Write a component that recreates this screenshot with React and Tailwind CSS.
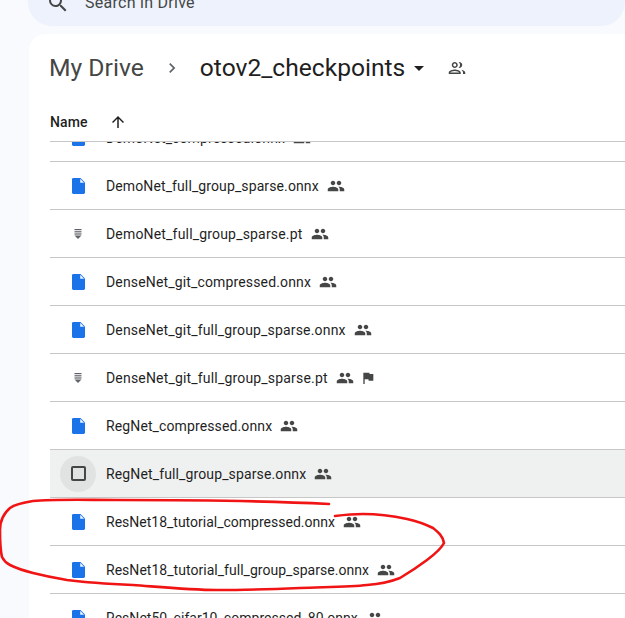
import React from "react";

const People = () => (
  <svg viewBox="0 0 24 24" width="18" height="18" fill="#444746">
    <path d="M16 11c1.66 0 2.99-1.34 2.99-3S17.66 5 16 5c-1.66 0-3 1.34-3 3s1.34 3 3 3zm-8 0c1.66 0 2.99-1.34 2.99-3S9.66 5 8 5C6.34 5 5 6.34 5 8s1.34 3 3 3zm0 2c-2.33 0-7 1.17-7 3.5V19h14v-2.5c0-2.33-4.67-3.5-7-3.5zm8 0c-.29 0-.62.02-.97.05 1.16.84 1.97 1.97 1.97 3.45V19h6v-2.5c0-2.33-4.67-3.5-7-3.5z" />
  </svg>
);

const FileIcon = () => (
  <svg viewBox="0 0 13 16" width="13" height="16" fill="#1a73e8">
    <path d="M1.400 0H8.500L13 4.500V14.600C13 15.400 12.400 16 11.600 16H1.400C.6 16 0 15.400 0 14.600V1.400C0 .6.6 0 1.400 0z" />
    <path d="M8.200 .8V4.800H12.200z" fill="#ffffff" opacity="0.9" />
  </svg>
);

const ZipIcon = () => (
  <svg viewBox="0 0 16 16" width="16" height="16" fill="#5f6368" className="-ml-[1px]">
    <rect x="4.500" y="3" width="7" height="1.200" />
    <rect x="4.500" y="5.200" width="7" height="1.200" />
    <rect x="4.500" y="7.400" width="7" height="1.200" />
    <path d="M4.500 9.600h7L8 13z" />
  </svg>
);

const Flag = () => (
  <svg viewBox="0 0 24 24" width="16" height="16" fill="#444746">
    <path d="M14.400 6 14 4H5v17h2v-7h5.600l.4 2h7V6z" />
  </svg>
);

const rows = [
  { name: "DemoNet_compressed.onnx", icon: "file", track: "tracking-[0.11px]" },
  { name: "DemoNet_full_group_sparse.onnx", icon: "file", track: "tracking-[0.11px]" },
  { name: "DemoNet_full_group_sparse.pt", icon: "zip", track: "tracking-[0.18px]" },
  { name: "DenseNet_git_compressed.onnx", icon: "file", track: "tracking-[0.15px]" },
  { name: "DenseNet_git_full_group_sparse.onnx", icon: "file", track: "tracking-[0.17px]" },
  { name: "DenseNet_git_full_group_sparse.pt", icon: "zip", flag: true, track: "tracking-[0.18px]" },
  { name: "RegNet_compressed.onnx", icon: "file", track: "tracking-[0.12px]" },
  { name: "RegNet_full_group_sparse.onnx", icon: "file", hover: true, track: "tracking-[0.13px]" },
  { name: "ResNet18_tutorial_compressed.onnx", icon: "file", track: "tracking-[0px]" },
  { name: "ResNet18_tutorial_full_group_sparse.onnx", icon: "file", track: "tracking-[0.03px]" },
  { name: "ResNet50_cifar10_compressed_80.onnx", icon: "file", track: "tracking-[0.03px]" },
];

function Row({ row }) {
  return (
    <div
      className={
        "flex h-12 items-center border-b border-[#c7c7c7] " +
        (row.hover ? "bg-[#eff1f0]" : "")
      }
    >
      <div className="flex w-[57px] shrink-0 items-center justify-center">
        {row.hover ? (
          <div className="-ml-[1px] flex h-9 w-9 items-center justify-center rounded-full bg-[#e1e3e2]">
            <div className="h-[15px] w-[15px] rounded-[2px] border-2 border-[#444746]" />
          </div>
        ) : row.icon === "file" ? (
          <FileIcon />
        ) : (
          <ZipIcon />
        )}
      </div>
      <span className={"-ml-[1px] text-[14px] leading-5 text-[#1f1f1f] " + row.track}>{row.name}</span>
      <span className="ml-[8px] flex items-center gap-[6px]">
        <People />
        {row.flag && <Flag />}
      </span>
    </div>
  );
}

export default function App() {
  return (
    <div
      className="relative h-[618px] w-[625px] overflow-hidden bg-[#f8fafd]"
      style={{ fontFamily: "Roboto, 'Liberation Sans', sans-serif" }}
    >
      <div className="ml-[28px] flex h-[26px] items-end rounded-b-[24px] bg-[#edf2fc] pb-[14px] pl-[18px]">
        <svg viewBox="0 0 24 24" width="24" height="24" fill="#444746" className="mb-[-3px]">
          <path d="M15.500 14h-.79l-.28-.27A6.471 6.471 0 0 0 16 9.500 6.500 6.500 0 1 0 9.500 16c1.610 0 3.090-.59 4.230-1.570l.27.28v.79l5 4.990L20.490 19l-4.990-5zm-6 0C7.010 14 5 11.990 5 9.500S7.010 5 9.500 5 14 7.010 14 9.500 11.990 14 9.500 14z" />
        </svg>
        <span className="ml-[15px] text-[16px] leading-[18px] tracking-[0.27px] text-[#444746]">Search in Drive</span>
      </div>

      <div className="ml-[29px] mt-2 h-[584px] overflow-hidden rounded-tl-2xl bg-white pl-[21px]">
        <div className="flex h-[68px] items-center">
          <span className="-ml-[1px] text-[24.7px] leading-8 text-[#444746]">My Drive</span>
          <svg viewBox="0 0 24 24" width="20" height="20" fill="#5f6368" className="ml-[18px]">
            <path d="M10 6 8.590 7.410 13.170 12l-4.580 4.590L10 18l6-6z" />
          </svg>
          <span className="ml-[18px] text-[24.6px] leading-8 text-[#1f1f1f]">otov2_checkpoints</span>
          <svg viewBox="0 0 10 5" width="10" height="5" fill="#1f1f1f" className="ml-[9px]">
            <path d="M0 0h10L5 5z" />
          </svg>
          <svg viewBox="0 0 24 24" width="18" height="18" fill="#444746" className="ml-[24px]">
            <path d="M9 12c2.200 0 4-1.800 4-4s-1.800-4-4-4-4 1.800-4 4 1.800 4 4 4zm0-6c1.100 0 2 .9 2 2s-.9 2-2 2-2-.9-2-2 .9-2 2-2zm0 8c-2.700 0-8 1.300-8 4v2h16v-2c0-2.700-5.300-4-8-4zm-6 4c.2-.7 3.300-2 6-2s5.800 1.300 6 2H3zM15 4c-.3 0-.6 0-.9.1 1.100 1 1.900 2.300 1.900 3.900s-.8 2.900-1.900 3.900c.3.100.6.100.9.100 2.200 0 4-1.800 4-4s-1.800-4-4-4zm2.500 10.300c1.400.9 2.500 2.200 2.500 3.700v2h3v-2c0-2.200-3-3.300-5.500-3.700z" />
          </svg>
        </div>

        <div className="flex h-[40px] items-center border-b border-[#c7c7c7] pt-[1px]">
          <span className="text-[14px] font-medium leading-5 tracking-[0.1px] text-[#1f1f1f]">Name</span>
          <svg viewBox="0 0 24 24" width="18" height="18" fill="#1f1f1f" className="ml-[21px]">
            <path d="M4 12l1.410 1.410L11 7.830V20h2V7.830l5.580 5.590L20 12l-8-8-8 8z" />
          </svg>
        </div>

        <div className="h-[476px] overflow-hidden">
          <div className="mt-[-28px]">
            {rows.map((r) => (
              <Row key={r.name} row={r} />
            ))}
          </div>
        </div>
      </div>

      <svg
        viewBox="0 0 625 618"
        width="625"
        height="618"
        className="pointer-events-none absolute left-0 top-0"
        fill="none"
        stroke="#f01414"
        strokeWidth="2.600"
        strokeLinecap="round"
        strokeLinejoin="round"
      >
        <path d="M329 504 C290 502 200 500 117 500 C85 500 55 499 33 501 C20 503 14 505 10 508 C3 514 0 522 0 530 C0 545 1 553 2 557 C4 561 6 563 10 565 C18 569 25 571 33 573 C45 576 55 578 67 580 C90 583 110 584 133 585 C160 587 190 590 217 590 C245 590 275 589 300 588 C325 587 350 587 367 585 C380 584 390 582 400 578 C410 572 419 566 427 560 C435 554 441 549 444 543 C443 536 438 532 433 528 C425 524 416 521 407 519 C393 516 378 514 363 514 C352 514 343 515 335 516" />
      </svg>
    </div>
  );
}
